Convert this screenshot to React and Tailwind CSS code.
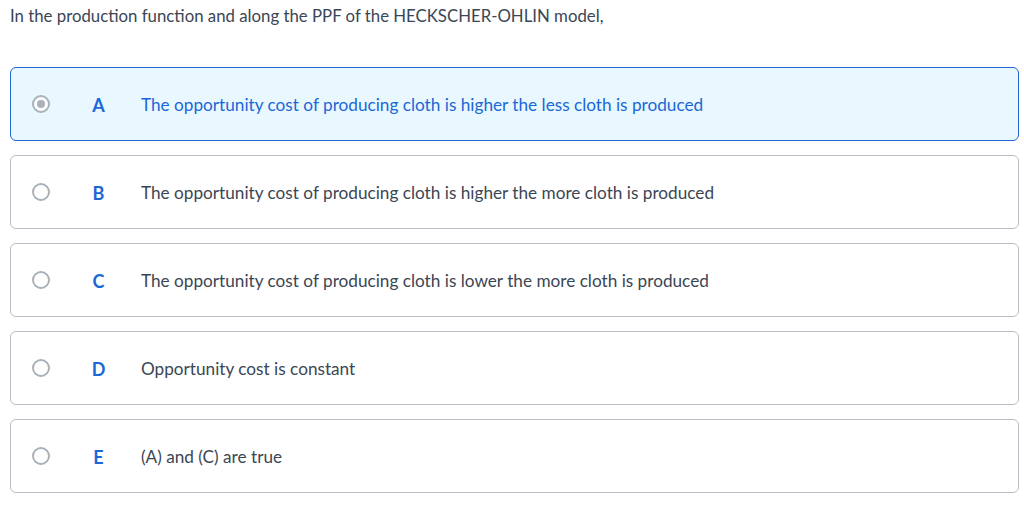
const options = [
  { letter: 'A', text: 'The opportunity cost of producing cloth is higher the less cloth is produced', selected: true },
  { letter: 'B', text: 'The opportunity cost of producing cloth is higher the more cloth is produced' },
  { letter: 'C', text: 'The opportunity cost of producing cloth is lower the more cloth is produced' },
  { letter: 'D', text: 'Opportunity cost is constant' },
  { letter: 'E', text: '(A) and (C) are true' },
]

function Radio({ checked }) {
  return (
    <span className="w-[18px] h-[18px] rounded-full border-2 border-[#aab1b9] flex items-center justify-center bg-white">
      {checked && <span className="w-[8px] h-[8px] rounded-full bg-[#aab1b9]" />}
    </span>
  )
}

export default function App() {
  return (
    <div className="w-[1024px] h-[509px] bg-white pl-[10px] pr-[5px] pt-[5px]" style={{ fontFamily: 'Lato, "Noto Sans", sans-serif' }}>
      <p className="text-[16.8px] leading-[22px] text-[#3b4654]">
        In the production function and along the PPF of the HECKSCHER-OHLIN model,
      </p>
      <div className="mt-[40px] flex flex-col gap-[14px]">
        {options.map((o) => (
          <div
            key={o.letter}
            className={`h-[74px] rounded-[6px] border flex items-center ${
              o.selected ? 'border-[#1f66d6] bg-[#e8f8fe]' : 'border-[#b7bec5] bg-white'
            }`}
          >
            <div className="w-[59px] flex justify-center">
              <Radio checked={o.selected} />
            </div>
            <div className="w-[57px] flex justify-center pt-[2px] text-[18px] font-bold text-[#1c67d8]">{o.letter}</div>
            <div className={`pl-[14px] pt-[2px] text-[17.2px] ${o.selected ? 'text-[#1c67d8]' : 'text-[#3b4654]'}`}>{o.text}</div>
          </div>
        ))}
      </div>
    </div>
  )
}
